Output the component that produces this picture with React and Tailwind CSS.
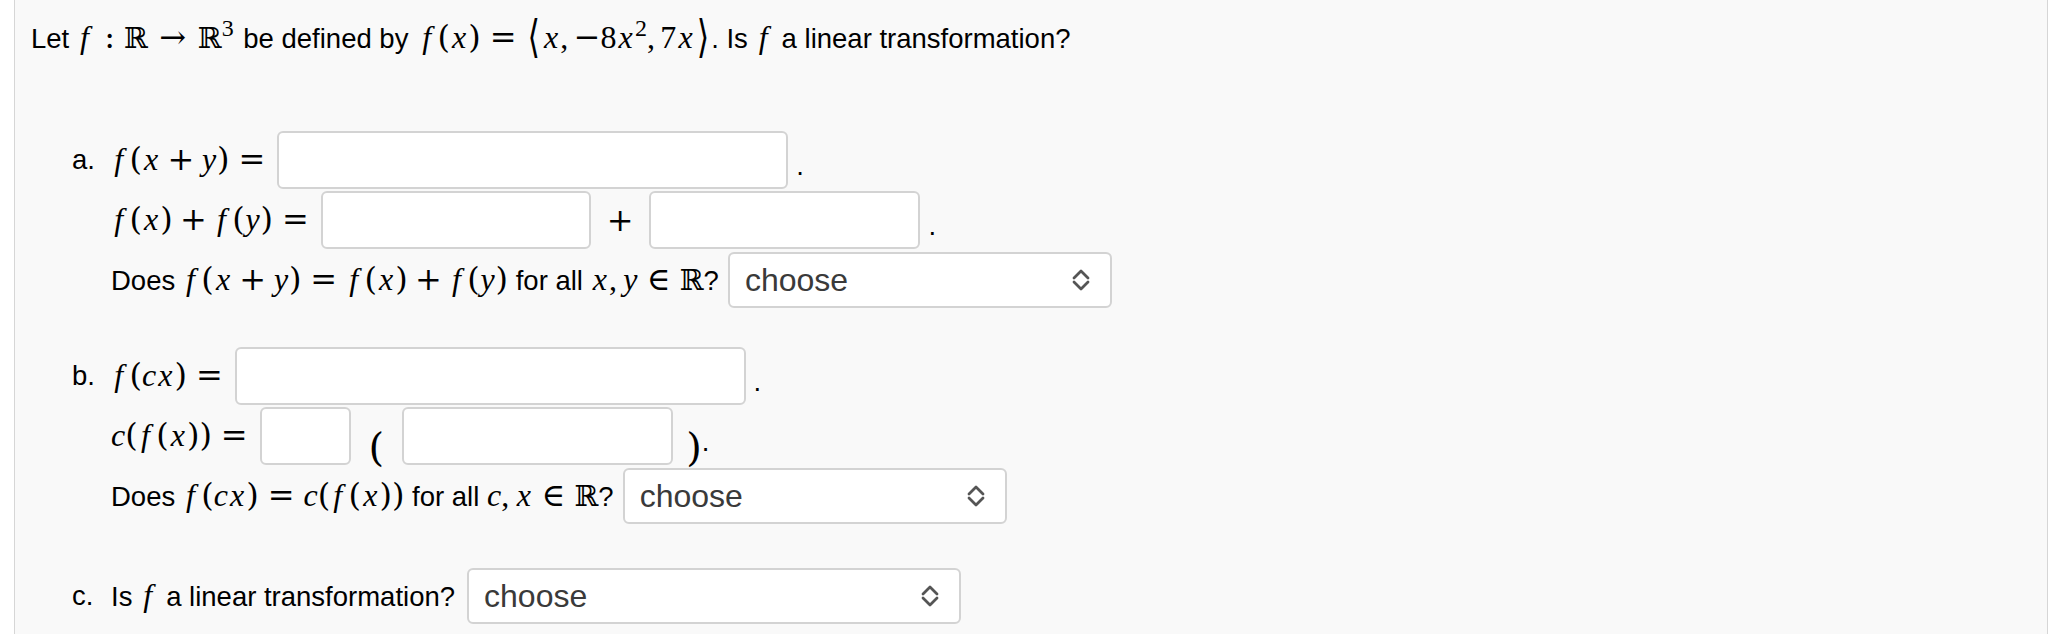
import React from 'react';

// math bits: serif letters padded out to TeX widths, DejaVu operators
const M = ({ children, className = '' }) => (
  <span className={`font-[family-name:Liberation_Serif,DejaVu_Serif,serif] text-[32px] whitespace-nowrap ${className}`}>{children}</span>
);
const X = () => <i className="px-[0.065em]">x</i>;
const Y = () => <i className="px-[0.025em]">y</i>;
const C = () => <i>c</i>;
const F = () => <i className="pl-[0.1em] pr-[0.2em]">f</i>;
const Op = ({ children }) => <span className="font-[family-name:DejaVu_Serif,serif] font-light">{children}</span>;
const Rel = ({ children }) => <span className="mx-[0.278em] font-[family-name:DejaVu_Serif,serif]">{children}</span>;
const Bin = ({ children }) => <span className="mx-[0.222em] font-[family-name:DejaVu_Serif,serif]">{children}</span>;
const R = () => <span className="font-[family-name:DejaVu_Serif,serif] text-[0.9em]">ℝ</span>;
const Comma = () => <span className="mr-[0.17em]">,</span>;
const L = () => <Op>(</Op>;
const Rp = () => <Op>)</Op>;

const Field = ({ w }) => (
  <div className={`h-[58px] shrink-0 rounded-[6px] border-2 border-[#d3d3d3] bg-white ${w}`} />
);

const Choose = ({ w }) => (
  <div className={`flex h-[56px] shrink-0 items-center justify-between rounded-[6px] border-2 border-[#d3d3d3] bg-white pl-[15px] pr-[19px] text-[32px] text-[#3a3a3a] ${w}`}>
    <span>choose</span>
    <svg width="20" height="24" viewBox="0 0 20 24" fill="none" stroke="#555" strokeWidth="2.8" strokeLinecap="round" strokeLinejoin="round">
      <path d="M3 10 L10 3 L17 10" />
      <path d="M3 14 L10 21 L17 14" />
    </svg>
  </div>
);

const Row = ({ children }) => (
  <div className="flex h-[60px] items-center">{children}</div>
);

const Lbl = ({ children }) => <span className="leading-[40px] whitespace-nowrap">{children}</span>;

const Dot = () => <span className="ml-[8px] translate-y-[6px] leading-none">.</span>;

export default function App() {
  return (
    <div className="min-h-screen bg-white font-[family-name:Liberation_Sans,Arial,sans-serif] text-[27.5px] text-black">
      <div className="ml-[14px] min-h-[634px] border-x border-[#d6d6d6] bg-[#f9f9f9] pl-[16px] pt-[17px]">
        {/* question */}
        <p className="h-[40px] leading-[40px] whitespace-nowrap">
          Let{' '}
          <M className="mr-[2px]">
            <F />
            <Rel>:</Rel>
            <R />
            <span className="mx-[0.36em] font-[family-name:DejaVu_Serif,serif]">→</span>
            <R />
            <sup>3</sup>
          </M>{' '}
          be defined by{' '}
          <M className="ml-[3px]">
            <F /><L /><X /><Rp /><Rel>=</Rel>
            <span className="inline-block origin-center scale-y-[1.4] px-[2px] font-[family-name:DejaVu_Serif,serif] font-light">⟨</span>
            <X />
            <Comma />
            <Op>−</Op>8<X />
            <sup>2</sup>
            <Comma />7<X />
            <span className="inline-block origin-center scale-y-[1.4] px-[2px] font-[family-name:DejaVu_Serif,serif] font-light">⟩</span>
          </M>
          . Is <M><F /></M> a linear transformation?
        </p>

        <ol className="mt-[73px] pl-[41px]">
          {/* a */}
          <li className="flex">
            <span className="flex h-[60px] w-[39px] shrink-0 items-center">a.</span>
            <div>
              <Row>
                <Lbl>
                  <M>
                    <F /><L /><X />
                    <Bin>+</Bin>
                    <Y /><Rp /><Rel>=</Rel>
                  </M>
                </Lbl>
                <div className="ml-[3px]"><Field w="w-[511px]" /></div>
                <Dot />
              </Row>
              <Row>
                <Lbl>
                  <M>
                    <F /><L /><X /><Rp /><Bin>+</Bin>
                    <F /><L /><Y /><Rp /><Rel>=</Rel>
                  </M>
                </Lbl>
                <div className="ml-[3px]"><Field w="w-[270px]" /></div>
                <span className="mx-[16px] font-[family-name:DejaVu_Serif,serif] text-[32px] font-light leading-none">+</span>
                <Field w="w-[271px]" />
                <Dot />
              </Row>
              <Row>
                <Lbl>
                  Does{' '}
                  <M>
                    <F /><L /><X />
                    <Bin>+</Bin>
                    <Y /><Rp /><Rel>=</Rel>
                    <F /><L /><X /><Rp /><Bin>+</Bin>
                    <F /><L /><Y /><Rp />
                  </M>{' '}
                  for all{' '}
                  <M>
                    <X />
                    <Comma />
                    <Y />
                    <Rel>∈</Rel>
                    <R />
                  </M>
                  ?
                </Lbl>
                <div className="ml-[9px]"><Choose w="w-[384px]" /></div>
              </Row>
            </div>
          </li>

          {/* b */}
          <li className="mt-[36px] flex">
            <span className="flex h-[60px] w-[39px] shrink-0 items-center">b.</span>
            <div>
              <Row>
                <Lbl>
                  <M>
                    <F /><L /><C /><X /><Rp /><Rel>=</Rel>
                  </M>
                </Lbl>
                <div className="ml-[3px]"><Field w="w-[511px]" /></div>
                <Dot />
              </Row>
              <Row>
                <Lbl>
                  <M>
                    <C /><L /><F /><L /><X /><Rp /><Rp /><Rel>=</Rel>
                  </M>
                </Lbl>
                <div className="ml-[3px]"><Field w="w-[91px]" /></div>
                <span className="mx-[18px] translate-y-[11px] font-[family-name:DejaVu_Serif,serif] text-[40px] font-light leading-none">(</span>
                <Field w="w-[271px]" />
                <span className="ml-[13px] translate-y-[11px] font-[family-name:DejaVu_Serif,serif] text-[40px] font-light leading-none">)</span>
                <span className="translate-y-[6px] leading-none">.</span>
              </Row>
              <Row>
                <Lbl>
                  Does{' '}
                  <M>
                    <F /><L /><C /><X /><Rp /><Rel>=</Rel>
                    <C /><L /><F /><L /><X /><Rp /><Rp />
                  </M>{' '}
                  for all{' '}
                  <M>
                    <C />
                    <Comma />
                    <X />
                    <Rel>∈</Rel>
                    <R />
                  </M>
                  ?
                </Lbl>
                <div className="ml-[9px]"><Choose w="w-[384px]" /></div>
              </Row>
            </div>
          </li>

          {/* c */}
          <li className="mt-[40px] flex">
            <span className="flex h-[60px] w-[39px] shrink-0 items-center">c.</span>
            <Row>
              <Lbl>
                Is <M><F /></M> a linear transformation?
              </Lbl>
              <div className="ml-[12px]"><Choose w="w-[494px]" /></div>
            </Row>
          </li>
        </ol>
      </div>
    </div>
  );
}
